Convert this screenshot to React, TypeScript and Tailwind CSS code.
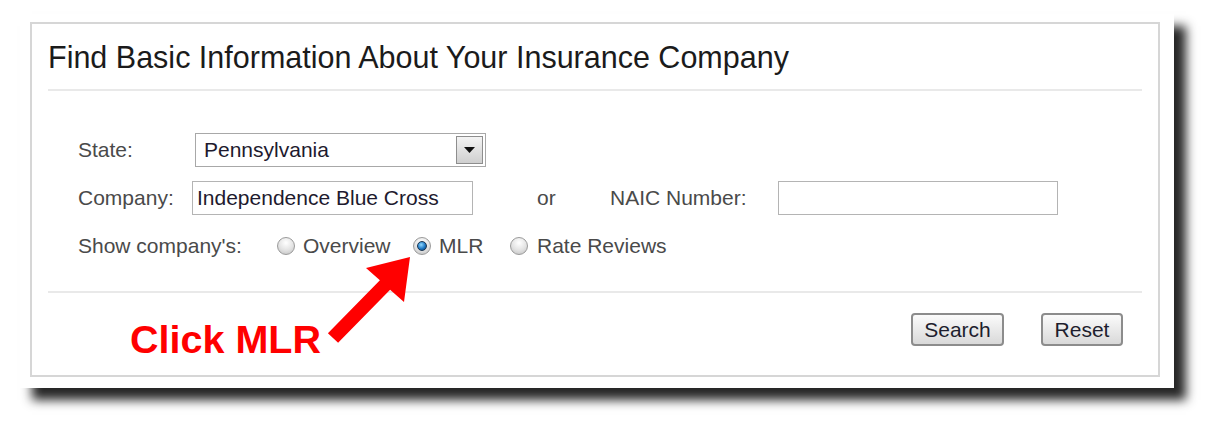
import React from "react";

const font = { fontFamily: '"Liberation Sans", Arial, sans-serif' };

function Radio({ checked }: { checked?: boolean }) {
  return (
    <span className="flex h-[18px] w-[18px] shrink-0 items-center justify-center rounded-full border border-[#9a9a9a] bg-[radial-gradient(circle_at_50%_30%,#ffffff,#e2e2e2_55%,#bdbdbd)]">
      {checked && (
        <span className="h-[10px] w-[10px] rounded-full border border-[#1a3550] bg-[radial-gradient(circle_at_40%_35%,#8fd8ff,#1f78c4_55%,#0b3d6e)]" />
      )}
    </span>
  );
}

function Button({ label, width }: { label: string; width: string }) {
  return (
    <button
      className={`${width} h-[33px] rounded-[4px] border-2 border-[#8c8c8c] bg-gradient-to-b from-[#fbfbfb] to-[#d9d9d9] text-[21px] leading-none text-[#1e1e2e]`}
      style={font}
    >
      {label}
    </button>
  );
}

export default function App() {
  return (
    <div className="h-[448px] w-[1230px] bg-white pl-[20px] pt-[14px]" style={font}>
      <div className="relative h-[374px] w-[1154px] bg-white pl-[10px] pr-[14px] pt-[8px] shadow-[12px_12px_10px_rgba(0,0,0,0.85)]">
        <div className="flex h-[355px] flex-col border-2 border-[#d6d6d6]">
          <h1 className="ml-[16px] mt-[18px] text-[30.5px] leading-[30px] text-[#1b1b1b]">
            Find Basic Information About Your Insurance Company
          </h1>
          <div className="mx-4 mt-[17px] h-[2px] bg-[#e9e9e9]" />

          <div className="mt-[42px] flex flex-col gap-[14px] pl-[46px] text-[21px] text-[#4a4a4a]">
            <div className="flex h-[34px] items-center">
              <span className="w-[117px]">State:</span>
              <div className="flex h-[34px] w-[291px] items-center justify-between border border-[#a8a8a8] pl-[8px] pr-[2px] text-[#1e1a2e]">
                <span>Pennsylvania</span>
                <span className="flex h-[28px] w-[27px] items-center justify-center border border-[#8e8e8e] bg-gradient-to-b from-[#f4f4f4] to-[#cfcfcf]">
                  <svg width="11" height="6" viewBox="0 0 11 6">
                    <path d="M0 0 H11 L5.5 6 Z" fill="#111" />
                  </svg>
                </span>
              </div>
            </div>

            <div className="flex h-[34px] items-center">
              <span className="w-[114px]">Company:</span>
              <div className="flex h-[34px] w-[281px] items-center border border-[#b4b4b4] pl-[4px] text-[#1e1a2e]">
                Independence Blue Cross
              </div>
              <span className="ml-[64px] w-[73px]">or</span>
              <span className="w-[168px]">NAIC Number:</span>
              <div className="h-[34px] w-[280px] border border-[#b4b4b4]" />
            </div>

            <div className="flex h-[34px] items-center">
              <span className="w-[199px]">Show company's:</span>
              <Radio />
              <span className="ml-[8px] w-[110px]">Overview</span>
              <Radio checked />
              <span className="ml-[8px] w-[71px]">MLR</span>
              <Radio />
              <span className="ml-[9px]">Rate Reviews</span>
            </div>
          </div>

          <div className="mx-4 mt-[28px] h-[2px] bg-[#e9e9e9]" />

          <div className="mr-[35px] mt-[20px] flex justify-end gap-[37px]">
            <Button label="Search" width="w-[93px]" />
            <Button label="Reset" width="w-[82px]" />
          </div>
        </div>

        {/* annotation overlay */}
        <span className="absolute left-[110px] top-[306px] text-[39.5px] font-bold leading-none text-[#ff0000]">
          Click MLR
        </span>
        <svg className="absolute left-[300px] top-[236px]" width="100" height="100" viewBox="0 0 100 100">
          <polygon
            points="90,7 84,52 70.1,39.8 18.1,92.8 7.9,83.2 59.9,30.2 46,18"
            fill="#ff0000"
          />
        </svg>
      </div>
    </div>
  );
}
